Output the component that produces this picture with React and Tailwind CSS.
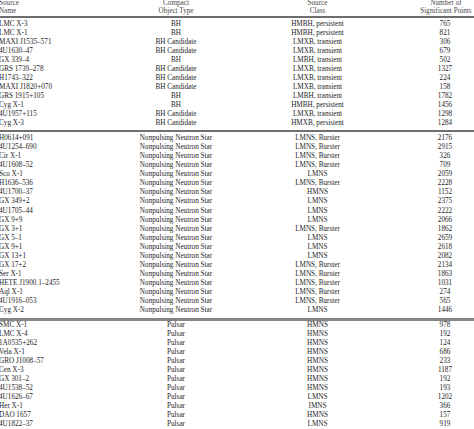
const SECTIONS = [
  [
    ["LMC X-3", "BH", "HMBH, persistent", "765"],
    ["LMC X-1", "BH", "HMBH, persistent", "821"],
    ["MAXI J1535–571", "BH Candidate", "LMXB, transient", "306"],
    ["4U1630–47", "BH Candidate", "LMXB, transient", "679"],
    ["GX 339–4", "BH", "LMBH, transient", "502"],
    ["GRS 1739–278", "BH Candidate", "LMXB, transient", "1327"],
    ["H1743–322", "BH Candidate", "LMXB, transient", "224"],
    ["MAXI J1820+070", "BH Candidate", "LMXB, transient", "158"],
    ["GRS 1915+105", "BH", "LMBH, transient", "1782"],
    ["Cyg X-1", "BH", "HMBH, persistent", "1456"],
    ["4U1957+115", "BH Candidate", "LMXB, transient", "1298"],
    ["Cyg X-3", "BH Candidate", "HMXB, persistent", "1284"],
  ],
  [
    ["H0614+091", "Nonpulsing Neutron Star", "LMNS, Burster", "2176"],
    ["4U1254–690", "Nonpulsing Neutron Star", "LMNS, Burster", "2915"],
    ["Cir X-1", "Nonpulsing Neutron Star", "LMNS, Burster", "326"],
    ["4U1608–52", "Nonpulsing Neutron Star", "LMNS, Burster", "709"],
    ["Sco X-1", "Nonpulsing Neutron Star", "LMNS", "2059"],
    ["H1636–536", "Nonpulsing Neutron Star", "LMNS, Burster", "2228"],
    ["4U1700–37", "Nonpulsing Neutron Star", "HMNS", "1152"],
    ["GX 349+2", "Nonpulsing Neutron Star", "LMNS", "2375"],
    ["4U1705–44", "Nonpulsing Neutron Star", "LMNS", "2222"],
    ["GX 9+9", "Nonpulsing Neutron Star", "LMNS", "2066"],
    ["GX 3+1", "Nonpulsing Neutron Star", "LMNS, Burster", "1862"],
    ["GX 5–1", "Nonpulsing Neutron Star", "LMNS", "2659"],
    ["GX 9+1", "Nonpulsing Neutron Star", "LMNS", "2618"],
    ["GX 13+1", "Nonpulsing Neutron Star", "LMNS", "2082"],
    ["GX 17+2", "Nonpulsing Neutron Star", "LMNS, Burster", "2134"],
    ["Ser X-1", "Nonpulsing Neutron Star", "LMNS, Burster", "1863"],
    ["HETE J1900.1–2455", "Nonpulsing Neutron Star", "LMNS, Burster", "1031"],
    ["Aql X-1", "Nonpulsing Neutron Star", "LMNS, Burster", "274"],
    ["4U1916–053", "Nonpulsing Neutron Star", "LMNS, Burster", "565"],
    ["Cyg X-2", "Nonpulsing Neutron Star", "LMNS", "1446"],
  ],
  [
    ["SMC X-1", "Pulsar", "HMNS", "978"],
    ["LMC X-4", "Pulsar", "HMNS", "192"],
    ["1A0535+262", "Pulsar", "HMNS", "124"],
    ["Vela X-1", "Pulsar", "HMNS", "686"],
    ["GRO J1008–57", "Pulsar", "HMNS", "233"],
    ["Cen X-3", "Pulsar", "HMNS", "1187"],
    ["GX 301–2", "Pulsar", "HMNS", "192"],
    ["4U1538–52", "Pulsar", "HMNS", "193"],
    ["4U1626–67", "Pulsar", "LMNS", "1202"],
    ["Her X-1", "Pulsar", "IMNS", "366"],
    ["DAO 1657", "Pulsar", "HMNS", "157"],
    ["4U1822–37", "Pulsar", "LMNS", "919"],
  ],
];

const GRID = "grid grid-cols-[107px_140px_143px_114px]";

function Row({ cells }) {
  return (
    <div className={`${GRID} h-[9.05px] leading-[9.05px] whitespace-nowrap`}>
      <div>{cells[0]}</div>
      <div className="text-center">{cells[1]}</div>
      <div className="text-center">{cells[2]}</div>
      <div className="text-center pr-[2px]">{cells[3]}</div>
    </div>
  );
}

export default function App() {
  return (
    <div className="w-[474px] h-[429px] overflow-hidden bg-white">
      <div
        className="w-[504px] ml-[-1px] text-[7.2px] text-[#1e1e1e]"
        style={{ fontFamily: '"Liberation Serif", "Times New Roman", serif' }}
      >
        <div className={`${GRID} mt-[-1.3px] leading-[8px] text-[#4a4a4a] whitespace-nowrap`}>
          <div>
            <div>Source</div>
            <div>Name</div>
          </div>
          <div className="text-center">
            <div>Compact</div>
            <div>Object Type</div>
          </div>
          <div className="text-center">
            <div>Source</div>
            <div>Class</div>
          </div>
          <div className="text-center">
            <div>Number of</div>
            <div>Significant Points</div>
          </div>
        </div>
        <div className="mt-[0.8px] h-[2px] bg-[#6e6e6e]" />

        <div className="pt-[2px]">
          {SECTIONS[0].map((r) => (
            <Row key={r[0]} cells={r} />
          ))}
        </div>
        <div className="mt-[1.6px] h-[2px] bg-[#707070]" />

        <div className="pt-[2.5px]">
          {SECTIONS[1].map((r) => (
            <Row key={r[0]} cells={r} />
          ))}
        </div>
        <div className="mt-[3px] h-[2.5px] bg-[#858585]" />

        <div>
          {SECTIONS[2].map((r) => (
            <Row key={r[0]} cells={r} />
          ))}
        </div>
      </div>
    </div>
  );
}
